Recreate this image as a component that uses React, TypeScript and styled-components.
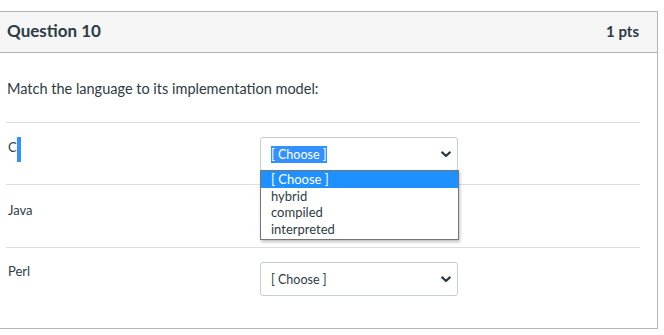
import React from "react";
import styled, { createGlobalStyle } from "styled-components";

const Global = createGlobalStyle`
  html, body { margin: 0; padding: 0; background: #fff; }
  body { font-family: Lato, "Noto Sans", sans-serif; color: #2d3b45; }
`;

const Panel = styled.div`
  margin: 11px 0 0 -1px;
  width: 659px;
  box-sizing: border-box;
  border: 1px solid #b5b5b5;
`;

const Header = styled.div`
  height: 41px;
  box-sizing: border-box;
  background: #f5f5f5;
  border-bottom: 1px solid #b5b5b5;
  display: flex;
  align-items: center;
  justify-content: space-between;
  padding: 0 18px 3px 7px;
`;

const Title = styled.div`
  font-size: 17px;
  font-weight: 700;
  color: #2d3b45;
`;

const Points = styled.div`
  font-size: 15px;
  font-weight: 700;
  color: #2d3b45;
`;

const Body = styled.div`
  padding: 26px 17px 19px 6px;
`;

const Prompt = styled.div`
  font-size: 14.5px;
  line-height: 20px;
  margin-bottom: 23px;
  padding-left: 1px;
`;

const Row = styled.div<{ $bottom: number }>`
  display: flex;
  height: 34px;
  border-top: 1px solid #dcdcdc;
  padding: 14px 0 ${(p) => p.$bottom}px;
`;

const Label = styled.div<{ $top: number }>`
  width: 254px;
  box-sizing: border-box;
  padding: ${(p) => p.$top}px 0 0 2px;
  font-size: 13px;
  line-height: 18px;
  display: flex;
  align-items: flex-start;
`;

const Caret = styled.span`
  display: inline-block;
  width: 4px;
  height: 25px;
  margin-top: -1px;
  background: #3390ff;
`;

const SelectWrap = styled.div`
  position: relative;
`;

const Select = styled.div`
  width: 198px;
  height: 34px;
  box-sizing: border-box;
  border: 1px solid #c7cdd1;
  border-radius: 3px;
  background: #fff;
  display: flex;
  align-items: center;
  justify-content: space-between;
  padding: 0 6px 0 10px;
  font-size: 12.5px;
  color: #2d3b45;
`;

const Highlight = styled.span`
  background: #3390ff;
  color: #fff;
  padding: 1px 0;
`;

const List = styled.div`
  position: absolute;
  left: 0;
  top: 33px;
  width: 199px;
  box-sizing: border-box;
  border: 1px solid #767676;
  background: #fff;
  box-shadow: 1px 2px 3px rgba(0, 0, 0, 0.25);
  padding: 0 0 2px;
  z-index: 2;
`;

const Option = styled.div<{ $active?: boolean }>`
  height: 16.5px;
  line-height: 16px;
  font-size: 13px;
  padding-left: 10px;
  background: ${(p) => (p.$active ? "#1e90ff" : "transparent")};
  color: ${(p) => (p.$active ? "#fff" : "#2d3b45")};
`;

const Chevron = () => (
  <svg width="10" height="7" viewBox="0 0 10 7">
    <path d="M1.2 1.4 L5 5 L8.8 1.4" fill="none" stroke="#2d3b45" strokeWidth="2.2" strokeLinecap="round" strokeLinejoin="round" />
  </svg>
);

const options = ["[ Choose ]", "hybrid", "compiled", "interpreted"];

export default function App() {
  return (
    <>
      <Global />
      <Panel>
        <Header>
          <Title>Question 10</Title>
          <Points>1 pts</Points>
        </Header>
        <Body>
          <Prompt>Match the language to its implementation model:</Prompt>
          <Row $bottom={13}>
            <Label $top={1}>
              <span>C</span>
              <Caret />
            </Label>
            <SelectWrap>
              <Select>
                <span>
                  <Highlight>[ Choose ]</Highlight>
                </span>
                <Chevron />
              </Select>
              <List>
                {options.map((o, i) => (
                  <Option key={o} $active={i === 0}>
                    {o}
                  </Option>
                ))}
              </List>
            </SelectWrap>
          </Row>
          <Row $bottom={14}>
            <Label $top={2}>Java</Label>
            <SelectWrap>
              <Select>
                <span>[ Choose ]</span>
                <Chevron />
              </Select>
            </SelectWrap>
          </Row>
          <Row $bottom={13}>
            <Label $top={0}>Perl</Label>
            <SelectWrap>
              <Select>
                <span>[ Choose ]</span>
                <Chevron />
              </Select>
            </SelectWrap>
          </Row>
        </Body>
      </Panel>
    </>
  );
}
